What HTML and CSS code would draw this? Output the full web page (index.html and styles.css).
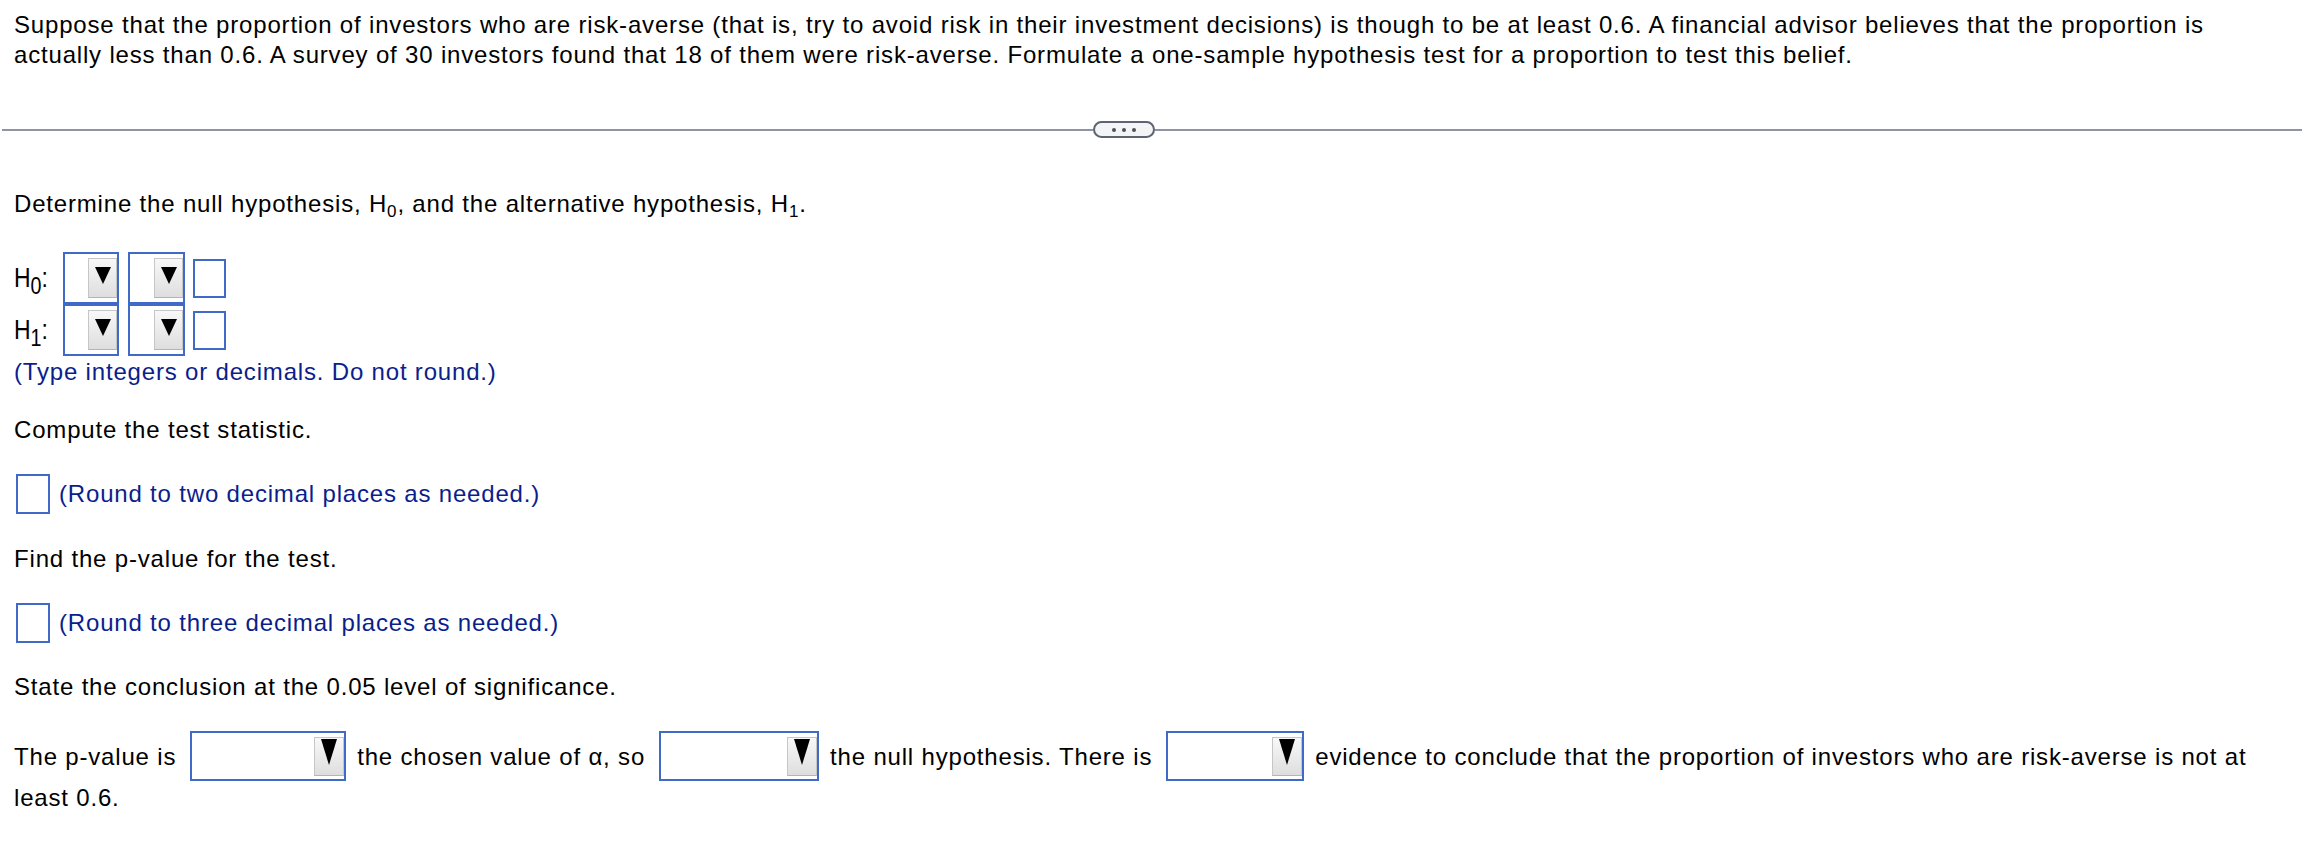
FILE: index.html
```html
<!DOCTYPE html>
<html>
<head>
<meta charset="utf-8">
<link rel="stylesheet" href="styles.css">
</head>
<body>
<div class="page">
  <p class="intro">Suppose that the proportion of investors who are risk-averse (that is, try to avoid risk in their investment decisions) is though to be at least 0.6. A financial advisor believes that the proportion is actually less than 0.6. A survey of 30 investors found that 18 of them were risk-averse. Formulate a one-sample hypothesis test for a proportion to test this belief.</p>

  <div class="sep">
    <div class="sep-line sep-left"></div>
    <div class="pill"><span class="dot"></span><span class="dot"></span><span class="dot"></span></div>
    <div class="sep-line sep-right"></div>
  </div>

  <p class="q q-determine">Determine the null hypothesis, H<sub class="sb">0</sub>, and the alternative hypothesis, H<sub class="sb">1</sub>.</p>

  <div class="hyp">
    <div class="hrow">
      <span class="hlabel"><span class="hh">H<sub class="hs">0</sub>:</span></span>
      <span class="dd dd-sm"><span class="ddbtn"><svg width="16" height="17" viewBox="0 0 16 17"><polygon points="0,0 16,0 8,17" fill="#000"/></svg></span></span>
      <span class="dd dd-sm"><span class="ddbtn"><svg width="16" height="17" viewBox="0 0 16 17"><polygon points="0,0 16,0 8,17" fill="#000"/></svg></span></span>
      <span class="sq"></span>
    </div>
    <div class="hrow">
      <span class="hlabel"><span class="hh">H<sub class="hs">1</sub>:</span></span>
      <span class="dd dd-sm"><span class="ddbtn"><svg width="16" height="17" viewBox="0 0 16 17"><polygon points="0,0 16,0 8,17" fill="#000"/></svg></span></span>
      <span class="dd dd-sm"><span class="ddbtn"><svg width="16" height="17" viewBox="0 0 16 17"><polygon points="0,0 16,0 8,17" fill="#000"/></svg></span></span>
      <span class="sq"></span>
    </div>
  </div>
  <p class="hint hint-type">(Type integers or decimals. Do not round.)</p>

  <p class="q q-compute">Compute the test statistic.</p>
  <div class="ansrow">
    <span class="inbox"></span>
    <span class="hint">(Round to two decimal places as needed.)</span>
  </div>

  <p class="q q-find">Find the p-value for the test.</p>
  <div class="ansrow">
    <span class="inbox"></span>
    <span class="hint">(Round to three decimal places as needed.)</span>
  </div>

  <p class="q q-state">State the conclusion at the 0.05 level of significance.</p>

  <p class="concl"><span>The p-value is </span><span class="dd dd-lg dd-w1"><span class="ddin"><span class="ddbtn ddbtn-lg"><svg width="16" height="26" viewBox="0 0 16 26"><polygon points="0,0 16,0 8,26" fill="#000"/></svg></span></span></span><span> the chosen value of α, so </span><span class="dd dd-lg dd-w2"><span class="ddin"><span class="ddbtn ddbtn-lg"><svg width="16" height="26" viewBox="0 0 16 26"><polygon points="0,0 16,0 8,26" fill="#000"/></svg></span></span></span><span> the null hypothesis. There is </span><span class="dd dd-lg dd-w3"><span class="ddin"><span class="ddbtn ddbtn-lg"><svg width="16" height="26" viewBox="0 0 16 26"><polygon points="0,0 16,0 8,26" fill="#000"/></svg></span></span></span><span> evidence to conclude that the proportion of investors who are risk-averse is not at </span><span>least 0.6.</span></p>
</div>
</body>
</html>
```

FILE: styles.css
```css
html, body {
  margin: 0;
  padding: 0;
  background: #fff;
}

body {
  font-family: "Liberation Sans", Arial, Helvetica, sans-serif;
  font-size: 24px;
  line-height: 30px;
  letter-spacing: 0.82px;
  color: #000;
}

.page {
  padding: 0 20px 0 14px;
}

p {
  margin: 0;
}

.intro {
  padding-top: 10px;
  max-width: 2230px;
}

/* separator */
.sep {
  display: flex;
  align-items: center;
  height: 17px;
  margin: 51px 0 0 -12px;
}

.sep-line {
  height: 2px;
  background: #8f93a3;
}

.sep-left {
  flex: 0 0 1091px;
}

.sep-right {
  flex: 1 1 auto;
}

.pill {
  box-sizing: border-box;
  width: 62px;
  height: 17px;
  border: 2px solid #5c6472;
  border-radius: 9px;
  background: #f2f4f6;
  display: flex;
  align-items: center;
  justify-content: center;
  gap: 6px;
}

.dot {
  width: 4px;
  height: 4px;
  border-radius: 50%;
  background: #4d5159;
}

/* questions */
.q-determine {
  margin-top: 51px;
}

.sb {
  font-size: 17px;
  line-height: 0;
  vertical-align: -5px;
}

.hyp {
  margin-top: 33px;
}

.hrow {
  display: flex;
  align-items: center;
  height: 52px;
}

.hlabel {
  width: 49px;
  flex: 0 0 49px;
}

.hh {
  display: inline-block;
  font-size: 28px;
  letter-spacing: 0;
  transform: scaleX(0.82);
  transform-origin: left center;
  white-space: nowrap;
}

.hs {
  font-size: 24px;
  line-height: 0;
  vertical-align: -7px;
}

.dd {
  box-sizing: border-box;
  border: 2px solid #4169c8;
  background: #fff;
}

.dd-sm {
  display: flex;
  align-items: center;
  justify-content: flex-end;
  width: 56px;
  height: 52px;
  margin-right: 9px;
}

.dd-sm + .dd-sm {
  width: 57px;
  margin-right: 8px;
}

.ddbtn {
  box-sizing: border-box;
  display: flex;
  align-items: flex-start;
  justify-content: center;
  width: 29px;
  height: 40px;
  padding-top: 8px;
  border: 1px solid #c6c6c6;
  border-bottom-color: #b4b4b4;
  background: linear-gradient(#f8f8f8, #dedede);
}

.ddbtn svg {
  display: block;
}

.sq {
  box-sizing: border-box;
  width: 33px;
  height: 39px;
  border: 2px solid #4169c8;
}

.hint {
  color: #0a1e8c;
}

.hint-type {
  margin-top: 1px;
}

.q-compute {
  margin-top: 28px;
}

.ansrow {
  display: flex;
  align-items: center;
  gap: 9px;
  margin-top: 29px;
  margin-left: 2px;
}

.inbox {
  box-sizing: border-box;
  width: 34px;
  height: 40px;
  border: 2px solid #4169c8;
}

.q-find {
  margin-top: 30px;
}

.q-state {
  margin-top: 29px;
}

/* conclusion */
.concl {
  margin-top: 29px;
  line-height: 34px;
}

.dd-lg {
  display: inline-block;
  overflow: hidden;
  height: 50px;
  vertical-align: -16px;
  margin: 0 4px 0 6px;
}

.dd-w1 { width: 156px; }
.dd-w2 { width: 160px; }
.dd-w3 { width: 138px; }

.ddin {
  display: flex;
  justify-content: flex-end;
  align-items: center;
  height: 100%;
}

.ddbtn-lg {
  width: 30px;
  height: 39px;
  padding-top: 1px;
}
```
